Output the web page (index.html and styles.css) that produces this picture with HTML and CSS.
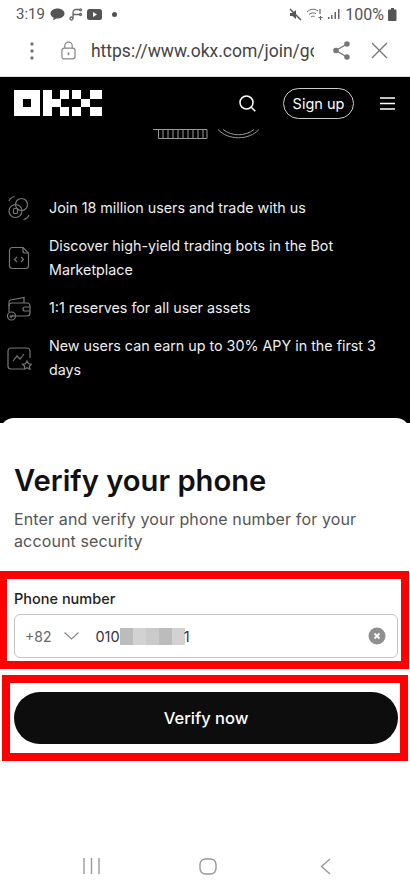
FILE: index.html
```html
<!DOCTYPE html>
<html lang="en">
<head>
	<meta charset="UTF-8">
	<meta name="viewport" content="width=device-width, initial-scale=1.0">
	<title>Verify your phone</title>
	<link rel="stylesheet" href="styles.css">
</head>
<body>
	<div class="status_bar">
		<div class="status_left">
			<span class="status_time">3:19</span>
			<svg width="15" height="13" viewBox="0 0 15 13"><path d="M7.500 0.500C3.600 0.500 0.500 2.700 0.500 5.500c0 1.800 1.300 3.300 3.200 4.200L3 12.500l3.200-2.100c.4 0 .9.100 1.300.100 3.900 0 7-2.200 7-5S11.400 0.500 7.500 0.500z" fill="#555"/></svg>
			<svg width="14" height="13" viewBox="0 0 14 13" fill="none" stroke="#666" stroke-width="1.300"><circle cx="2.500" cy="10.500" r="1.500"/><path d="M4 10.500V4.500C4 2.500 5.500 1.500 7 1.500h3M4 6.500h6"/><circle cx="11.500" cy="1.800" r="1"/><circle cx="11.500" cy="6.500" r="1"/></svg>
			<svg width="15" height="11" viewBox="0 0 15 11"><rect x="0" y="0" width="15" height="11" rx="2.500" fill="#555"/><path d="M6 3l4 2.500L6 8z" fill="#fff"/></svg>
			<span class="status_dot"></span>
		</div>
		<div class="status_right">
			<svg width="13" height="13" viewBox="0 0 13 13"><path d="M1 5h2.500L7 2v9L3.500 8H1z" fill="#555"/><path d="M1 1l11 11" stroke="#555" stroke-width="1.500"/></svg>
			<svg width="18" height="14" viewBox="0 0 18 14" fill="none" stroke="#666" stroke-width="1"><path d="M1 5c3.500-3.500 8-3.500 11-1M3 7.500c2.500-2 5-2 7-.8M5 10c1.200-1 2.500-1 3.600-.4"/><path d="M14 2v5M12.500 10.500h4M14.500 9v4" stroke-width="1.200"/></svg>
			<svg width="13" height="12" viewBox="0 0 13 12" fill="#666"><rect x="0" y="9" width="1.500" height="2"/><rect x="3" y="7" width="1.500" height="4"/><rect x="6.500" y="4" width="1.500" height="7"/><rect x="10" y="1" width="1.500" height="10"/></svg>
			<span class="status_pct">100%</span>
			<svg width="9" height="13" viewBox="0 0 9 13"><path d="M3 0h3v1.500h1.500a1 1 0 0 1 1 1V12a1 1 0 0 1-1 1h-6.500a1 1 0 0 1-1-1V2.500a1 1 0 0 1 1-1H3z" fill="#555"/></svg>
		</div>
	</div>

	<div class="url_bar">
		<svg class="url_more" width="4" height="18" viewBox="0 0 4 18" fill="#777"><circle cx="2" cy="2" r="1.700"/><circle cx="2" cy="9" r="1.700"/><circle cx="2" cy="16" r="1.700"/></svg>
		<svg class="url_lock" width="15" height="19" viewBox="0 0 16 20" fill="none" stroke="#888" stroke-width="1.300"><rect x="1" y="7.500" width="14" height="11.500" rx="2.500"/><path d="M4 7.500V5a4 4 0 0 1 8 0v2.500"/><path d="M8 12v3" stroke-width="1.800"/></svg>
		<div class="url_text">https://www.okx.com/join/go</div>
		<svg class="url_share" width="17" height="19" viewBox="0 0 17 19" fill="#777"><circle cx="14" cy="3" r="2.800"/><circle cx="3" cy="9.500" r="2.800"/><circle cx="14" cy="16" r="2.800"/><path d="M14 3L3 9.500L14 16" fill="none" stroke="#777" stroke-width="1.400"/></svg>
		<svg class="url_close" width="17" height="17" viewBox="0 0 17 17" stroke="#777" stroke-width="1.300"><path d="M1 1l15 15M16 1L1 16"/></svg>
	</div>

	<div class="dark_part">
		<div class="nav">
			<svg class="logo" width="88" height="26" viewBox="0 0 88 26" fill="#fff">
				<path d="M0 0h26v26H0zM9 9v8h8V9z" fill-rule="evenodd"/>
				<rect x="29" y="0" width="9" height="26"/>
				<rect x="38" y="9" width="9" height="8"/>
				<rect x="46" y="0" width="9" height="9"/>
				<rect x="46" y="17" width="9" height="9"/>
				<rect x="58" y="0" width="9" height="9"/>
				<rect x="58" y="17" width="9" height="9"/>
				<rect x="67" y="9" width="9" height="8"/>
				<rect x="76" y="0" width="12" height="9"/>
				<rect x="76" y="17" width="12" height="9"/>
			</svg>
			<div class="nav_right">
				<svg width="17" height="17" viewBox="0 0 17 17" fill="none" stroke="#fff" stroke-width="1.500"><circle cx="7.500" cy="7.500" r="6.500"/><path d="M12.300 12.300L16.300 16.300"/></svg>
				<div class="btn_signup">Sign up</div>
				<svg width="15" height="13" viewBox="0 0 15 13" stroke="#fff" stroke-width="1.500"><path d="M0 1h15M0 6.500h15M0 12h15"/></svg>
			</div>
		</div>

		<div class="hero_rest">
			<svg width="108" height="11" viewBox="0 0 108 11" fill="none" stroke="#999">
				<path d="M0 .5h54v9H5.500V.5M10 .5v9M15 .5v9M20 .5v9M25 .5v9M30 .5v9M35 .5v9M40 .5v9M45 .5v9M50 .5v9"/>
				<path d="M65 .5c10 11 31 11 41 0M70 .5c9 7 22 7 31 0"/>
			</svg>
		</div>

		<ul class="feat_list">
			<li class="feat_item feat_one">
				<svg width="26" height="26" viewBox="0 0 26 26" fill="none" stroke="#777" stroke-width="1.200"><circle cx="15.500" cy="9.500" r="6"/><circle cx="9.500" cy="16" r="6.500"/><path d="M3 6c1-2.500 3-4 5.500-4.500M23 20c-1 2.500-3 4-5.500 4.500"/><rect x="7.500" y="13.500" width="4" height="5" rx="1"/></svg>
				<span>Join 18 million users and trade with us</span>
			</li>
			<li class="feat_item">
				<svg width="26" height="26" viewBox="0 0 26 26" fill="none" stroke="#777" stroke-width="1.200"><path d="M17 2.500H6.500a3 3 0 0 0-3 3v15a3 3 0 0 0 3 3h13a3 3 0 0 0 3-3V8z"/><path d="M17 2.500V6a2 2 0 0 0 2 2h3.500"/><path d="M11 12l-2.500 2.500L11 17M15 12l2.500 2.500L15 17"/></svg>
				<span>Discover high-yield trading bots in the Bot Marketplace</span>
			</li>
			<li class="feat_item">
				<svg width="26" height="26" viewBox="0 0 26 26" fill="none" stroke="#777" stroke-width="1.200"><path d="M3 11V7a2 2 0 0 1 1.500-2L18 2.500V8"/><path d="M4 21h17a3 3 0 0 0 3-3V11a3 3 0 0 0-3-3H6a3 3 0 0 0-3 3v6"/><path d="M24 12h-5a2 2 0 0 0 0 4h5"/><circle cx="5.500" cy="21" r="4"/><path d="M3.800 21l1.300 1.300 2-2.300"/></svg>
				<span>1:1 reserves for all user assets</span>
			</li>
			<li class="feat_item">
				<svg width="26" height="26" viewBox="0 0 26 26" fill="none" stroke="#777" stroke-width="1.200"><path d="M24 13V6a3 3 0 0 0-3-3H5a3 3 0 0 0-3 3v15a3 3 0 0 0 3 3h12"/><path d="M7 16l4-5 3 3 4-5"/><path d="M21 16l1.500 2.800 3 .4-2.200 2 .6 3-2.900-1.500-2.900 1.500.6-3-2.200-2 3-.4z"/></svg>
				<span>New users can earn up to 30% APY in the first 3 days</span>
			</li>
		</ul>
	</div>

	<div class="sheet">
		<h1>Verify your phone</h1>
		<p class="sheet_sub">Enter and verify your phone number for your account security</p>

		<div class="mark_box mark_phone">
			<label class="phone_label">Phone number</label>
			<div class="phone_input">
				<span class="phone_code">+82</span>
				<svg class="phone_chev" width="15" height="8" viewBox="0 0 15 8" fill="none" stroke="#888" stroke-width="1.200"><path d="M0.500 0.500l7 6.500 7-6.500"/></svg>
				<span class="phone_num">010<span class="blur_cells"><i class="c1"></i><i class="c2"></i><i class="c3"></i><i class="c1"></i><i class="c2"></i></span>1</span>
				<svg class="phone_clear" width="18" height="18" viewBox="0 0 18 18"><circle cx="9" cy="9" r="8.500" fill="#8f8f8f"/><path d="M6.500 6.500l5 5M11.500 6.500l-5 5" stroke="#fff" stroke-width="1.800"/></svg>
			</div>
		</div>

		<div class="mark_box mark_btn">
			<div class="btn_verify">Verify now</div>
		</div>
	</div>

	<div class="sys_nav">
		<svg width="17" height="16" viewBox="0 0 17 16" stroke="#999" stroke-width="1.400"><path d="M1 0v16M8.500 0v16M16 0v16"/></svg>
		<svg class="sys_home" width="18" height="17" viewBox="0 0 18 17" fill="none" stroke="#999" stroke-width="1.400"><rect x="1" y="1" width="16" height="15" rx="5.500"/></svg>
		<svg class="sys_back" width="11" height="17" viewBox="0 0 11 17" fill="none" stroke="#999" stroke-width="1.400"><path d="M10 1L1.500 8.500L10 16"/></svg>
	</div>
</body>
</html>
```

FILE: styles.css
```css
* {
	box-sizing: border-box;
}

html, body {
	height: 100%;
}

body {
	margin: 0;
	background-color: #fff;
	font-family: Inter, "Liberation Sans", sans-serif;
	color: #111;
	display: flex;
	flex-direction: column;
	overflow: hidden;
}

.status_bar {
	display: flex;
	justify-content: space-between;
	align-items: center;
	height: 28px;
	padding: 0 13px 0 16px;
	flex-shrink: 0;
}

.status_left, .status_right {
	display: flex;
	align-items: center;
	gap: 4px;
}

.status_time {
	font-family: Roboto, sans-serif;
	font-size: 15px;
	color: #555;
	margin-right: 1px;
}

.status_dot {
	width: 5px;
	height: 5px;
	border-radius: 50%;
	background-color: #555;
	margin-left: 6px;
}

.status_pct {
	font-family: Roboto, sans-serif;
	font-size: 16px;
	color: #555;
}

.url_bar {
	display: flex;
	align-items: center;
	height: 49px;
	padding: 0 22px 3px 30px;
	border-bottom: 1px solid #ddd;
	flex-shrink: 0;
}

.url_lock {
	margin-left: 27px;
}

.url_text {
	margin-left: 15px;
	width: 224px;
	overflow: hidden;
	white-space: nowrap;
	font-family: Roboto, sans-serif;
	font-size: 17.500px;
	color: #444;
}

.url_share {
	margin-left: 19px;
}

.url_close {
	margin-left: 21px;
}

.dark_part {
	background-color: #000;
	height: 346px;
	color: #fff;
	flex-shrink: 0;
}

.nav {
	display: flex;
	justify-content: space-between;
	align-items: center;
	height: 52px;
	padding: 0 15px 0 14px;
}

.nav_right {
	display: flex;
	align-items: center;
}

.btn_signup {
	border: 1px solid #ccc;
	border-radius: 16px;
	height: 31px;
	line-height: 29px;
	width: 71px;
	text-align: center;
	font-size: 14.500px;
	margin: 0 26px 0 27px;
}

.hero_rest {
	padding-left: 153px;
	height: 13px;
	line-height: 0;
}

.feat_list {
	list-style: none;
	margin: 53px 0 0;
	padding: 0 20px 0 6px;
}

.feat_item {
	display: flex;
	align-items: center;
	gap: 17px;
	font-size: 14.300px;
	line-height: 24px;
	color: #eee;
	margin-bottom: 13px;
}

.feat_item svg {
	flex-shrink: 0;
}

.sheet {
	flex-grow: 1;
	background-color: #fff;
	border-radius: 14px 14px 0 0;
	margin-top: -5px;
	padding-top: 46px;
}

.sheet h1 {
	margin: 0 14px;
	font-size: 29.200px;
	line-height: 34px;
	font-weight: 600;
	color: #111;
}

.sheet_sub {
	margin: 10px 14px 0;
	font-size: 16px;
	letter-spacing: 0.13px;
	line-height: 22px;
	color: #555;
}

.mark_box {
	border: 8px solid #f00;
	background-color: #fff;
}

.mark_phone {
	margin: 19px 1px 0 0;
	height: 98px;
	border-left-width: 7px;
	padding: 10px 3px 0 7px;
}

.phone_label {
	display: block;
	font-size: 14.500px;
	line-height: 20px;
	font-weight: 500;
	color: #222;
}

.phone_input {
	display: flex;
	align-items: center;
	height: 44px;
	margin-top: 5px;
	padding: 0 11px 0 10px;
	border: 1px solid #c4c4c4;
	border-radius: 6px;
}

.phone_code {
	font-size: 14px;
	color: #666;
}

.phone_chev {
	margin-left: 13px;
}

.phone_num {
	display: flex;
	align-items: center;
	margin-left: 16px;
	font-size: 14.500px;
	color: #333;
}

.blur_cells {
	display: flex;
	height: 17px;
	margin-right: -1px;
}

.blur_cells i {
	width: 13px;
	height: 17px;
}

.blur_cells .c1 {
	background-color: #bcbcbc;
}

.blur_cells .c2 {
	background-color: #d2d2d2;
}

.blur_cells .c3 {
	background-color: #cacaca;
}

.phone_clear {
	margin-left: auto;
}

.mark_btn {
	margin: 6px 2px 0 2px;
	height: 86px;
	padding: 9px 2px 0 4px;
}

.btn_verify {
	height: 52px;
	line-height: 52px;
	border-radius: 26px;
	background-color: #0d0d0d;
	color: #fff;
	text-align: center;
	font-size: 16.500px;
	font-weight: 500;
}

.sys_nav {
	display: flex;
	align-items: center;
	flex-shrink: 0;
	height: 32px;
	padding-left: 83px;
}

.sys_home {
	margin-left: 99px;
}

.sys_back {
	margin-left: 103px;
}
```
